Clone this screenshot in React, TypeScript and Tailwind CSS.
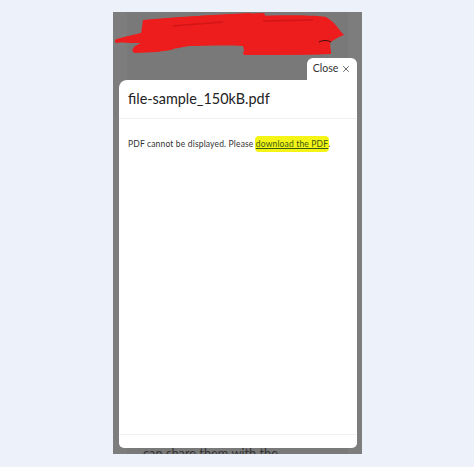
import { X } from "lucide-react";

function Scribble() {
  return (
    <svg width="249" height="50" viewBox="0 0 249 50" className="block">
      <path
        d="M30 8 C60 5 100 3 137 1 L140 4 C170 3 200 3 213 5 C222 10 226 18 231 23 C224 26 220 28 217 31 L218 42 C190 43 150 43 132 42 L130 34 C110 33 92 34 76 34 L60 37 C50 40 35 41 20 40 C18 36 23 33 28 31 C18 31 8 31 2 29 C8 25 18 24 28 22 Z"
        fill="#ee1d1d"
      />
      <path
        d="M4 29 C15 26 25 24 32 22 M22 39 C40 38 50 37 58 36 M132 41 C150 41 180 41 216 40 M34 10 C80 6 120 4 150 3"
        stroke="#ee1d1d"
        strokeWidth="4"
        fill="none"
        strokeLinecap="round"
      />
      <path d="M60 14 L110 10 M150 9 L200 8" stroke="#d21616" strokeWidth="1.5" fill="none" />
      <path d="M206 30 C210 28 214 28 218 30" stroke="#3a1010" strokeWidth="1" fill="none" />
    </svg>
  );
}

export default function App() {
  return (
    <div className="h-[467px] w-[474px] overflow-hidden bg-[#edf1f9] pl-[113px] pt-[12px] font-['Lato','Noto_Sans',sans-serif]">
      <div className="relative h-[442px] w-[249px] overflow-hidden bg-[#7d7d7d]">
        {/* page content behind the viewer */}
        <div className="mx-[14px] h-[442px] bg-[#797979]">
          <div className="-mx-[14px]">
            <Scribble />
          </div>
          <p className="mt-[379px] pl-[16px] text-[12.8px] leading-[24px] text-[#333]">
            can share them with the
          </p>
        </div>

        {/* pdf viewer */}
        <div className="absolute bottom-[6px] left-[6px] right-[5px] top-[46px] flex flex-col">
          <button className="flex h-[22px] w-[50px] items-center justify-center gap-[3px] self-end rounded-t-[6px] bg-white text-[10.5px] text-[#333]">
            Close
            <X className="h-[10px] w-[10px]" strokeWidth={1.75} />
          </button>
          <div className="flex flex-1 flex-col rounded-b-[5px] rounded-tl-[8px] bg-white">
            <div className="flex h-[39px] items-center border-b border-[#efefef] px-[9px] text-[14.4px] text-[#222]">
              file-sample_150kB.pdf
            </div>
            <div className="flex-1 px-[9px] pt-[19px] text-[8.5px] tracking-[0.16px] text-[#333]">
              PDF cannot be displayed. Please{" "}
              <a className="-mx-[1px] rounded-[4px] bg-[#f4f416] px-[1px] py-[3px] text-[#3a5a10] underline">
                download the PDF
              </a>
              .
            </div>
            <div className="h-[14px] border-t border-[#f0f0f0]" />
          </div>
        </div>
      </div>
    </div>
  );
}
